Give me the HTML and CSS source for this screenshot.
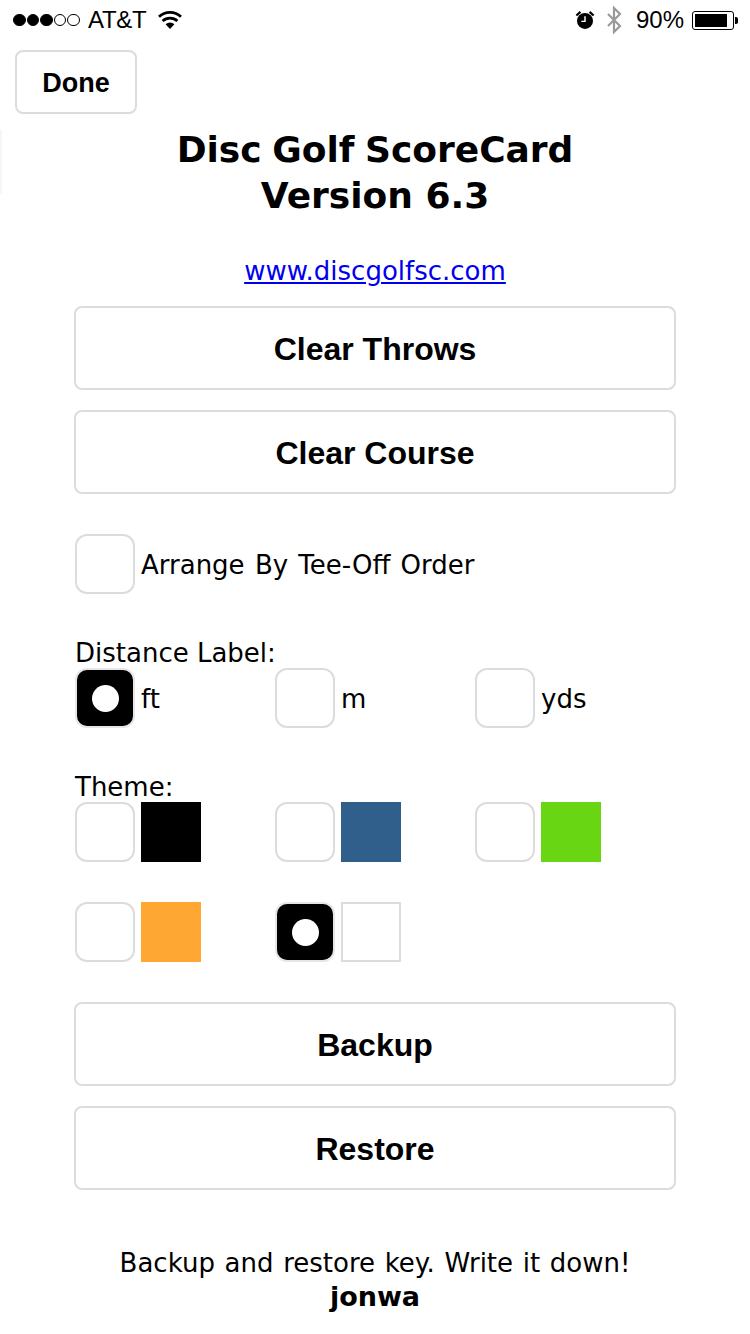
FILE: index.html
```html
<!DOCTYPE html>
<html lang="en">
<head>
<meta charset="utf-8">
<title>Disc Golf ScoreCard</title>
<link rel="stylesheet" href="styles.css">
</head>
<body>
<div class="edge"></div>
<div class="status">
  <div class="status-left">
    <span class="signal"><i class="on"></i><i class="on"></i><i class="on"></i><i></i><i></i></span>
    <span class="carrier">AT&amp;T</span>
    <svg class="wifi" width="26" height="20" viewBox="0 0 26 20"><path d="M13 19 L8.6 14.2 A6.5 6.5 0 0 1 17.4 14.2 Z" fill="#000"/><path d="M5.6 11 A10.8 10.8 0 0 1 20.4 11" fill="none" stroke="#000" stroke-width="2.8"/><path d="M2 6.8 A16 16 0 0 1 24 6.8" fill="none" stroke="#000" stroke-width="2.8"/></svg>
  </div>
  <div class="status-right">
    <svg class="alarm" width="20" height="20" viewBox="0 0 22 22"><circle cx="11" cy="12" r="8.8" fill="#000"/><path d="M11 7v5.5H7" fill="none" stroke="#fff" stroke-width="1.6"/><path d="M1.5 6 L6 2 M20.5 6 L16 2" stroke="#000" stroke-width="2.4"/></svg>
    <svg class="bt" width="16" height="28" viewBox="0 0 16 28"><path d="M2 8 L14 20 L8 26 V2 L14 8 L2 20" fill="none" stroke="#9a9a9a" stroke-width="2.2"/></svg>
    <span class="percent">90%</span>
    <span class="battery"><span class="level"></span></span><span class="nub"></span>
  </div>
</div>

<div class="top"><button class="btn done">Done</button></div>

<h1 class="title">Disc Golf ScoreCard<br>Version 6.3</h1>
<p class="site"><a href="#">www.discgolfsc.com</a></p>

<main class="content">
  <button class="btn wide">Clear Throws</button>
  <button class="btn wide">Clear Course</button>

  <div class="check-row">
    <span class="box"></span><span class="text">Arrange By Tee-Off Order</span>
  </div>

  <div class="label distance-label">Distance Label:</div>
  <div class="options">
    <div class="opt"><span class="box sel"></span><span class="text">ft</span></div>
    <div class="opt"><span class="box"></span><span class="text">m</span></div>
    <div class="opt"><span class="box"></span><span class="text">yds</span></div>
  </div>

  <div class="label theme-label">Theme:</div>
  <div class="options themes">
    <div class="opt"><span class="box"></span><span class="swatch black"></span></div>
    <div class="opt"><span class="box"></span><span class="swatch blue"></span></div>
    <div class="opt"><span class="box"></span><span class="swatch green"></span></div>
    <div class="opt"><span class="box"></span><span class="swatch orange"></span></div>
    <div class="opt"><span class="box sel"></span><span class="swatch white"></span></div>
  </div>

  <button class="btn wide">Backup</button>
  <button class="btn wide">Restore</button>
</main>

<footer class="foot">
  <div class="key-note">Backup and restore key. Write it down!</div>
  <div class="key">jonwa</div>
</footer>
</body>
</html>
```

FILE: styles.css
```css
* { box-sizing: border-box; }
html, body { margin: 0; padding: 0; background: #fff; color: #000; }
body { width: 750px; height: 1334px; overflow: hidden; font-family: "DejaVu Sans", sans-serif; position: relative; }

.edge { position: absolute; left: 0; top: 130px; width: 2px; height: 64px; background: #f6f6f6; }

.status { height: 40px; display: flex; justify-content: space-between; align-items: center; font-family: "Liberation Sans", Arial, sans-serif; font-size: 24px; padding: 0 12px 0 13px; }
.status-left, .status-right { display: flex; align-items: center; }
.signal { display: flex; gap: 1px; margin-right: 8px; }
.signal i { width: 12.6px; height: 12.6px; border-radius: 50%; border: 1px solid #000; }
.signal i.on { background: #000; }
.carrier { width: 58px; white-space: nowrap; letter-spacing: -0.3px; }
.wifi { margin-left: 11px; }
.alarm { margin-right: 11px; }
.bt { margin-right: 14px; }
.percent { margin-right: 8px; }
.battery { width: 42px; height: 19px; border: 1.5px solid #000; border-radius: 3px; padding: 2px; display: flex; }
.level { flex: 0 0 90%; background: #000; }
.nub { width: 3px; height: 7px; background: #000; margin-left: 1px; border-radius: 0 2px 2px 0; }

.btn { display: block; background: #fff; border: 2px solid #dcdcdc; border-radius: 8px; font-family: "Liberation Sans", Arial, sans-serif; font-weight: 700; color: #000; padding: 2px 0 0; }
.top { padding: 10px 0 0 15px; }
.done { width: 122px; height: 64px; font-size: 27px; }

.title { margin: 13px 0 0; text-align: center; font-size: 36px; line-height: 46px; font-weight: 700; }
.title::first-line { word-spacing: -2px; }
.site { margin: 36px 0 0; text-align: center; font-size: 26px; line-height: 32px; }
.site a { color: #0000ee; }

.content { margin: 19px 0 0 74px; width: 602px; }
.wide { width: 602px; height: 84px; font-size: 32px; margin-bottom: 20px; }

.box { flex: none; display: flex; align-items: center; justify-content: center; width: 60px; height: 60px; border: 2px solid #dcdcdc; border-radius: 12px; background: #fff; }
.box.sel { background: #000; border-color: #e6e6e6; }
.box.sel::after { content: ""; width: 27px; height: 27px; border-radius: 50%; background: #fff; }
.text { font-size: 26px; margin-left: 6px; padding-top: 2px; }

.check-row { display: flex; align-items: center; margin: 40px 0 0 1px; word-spacing: 2px; }
.label { font-size: 26px; line-height: 30px; margin-left: 1px; }
.distance-label { margin-top: 44px; }
.theme-label { margin-top: 44px; }

.options { display: grid; grid-template-columns: repeat(3, 200px); margin-left: 1px; }
.opt { display: flex; align-items: center; }
.themes { row-gap: 40px; margin-bottom: 40px; }
.swatch { flex: none; width: 60px; height: 60px; margin-left: 6px; }
.black { background: #000; }
.blue { background: #2f5f8a; }
.green { background: #69d614; }
.orange { background: #ffa733; }
.white { background: #fff; border: 2px solid #dcdcdc; }

.foot { margin-top: 56px; text-align: center; font-size: 26px; line-height: 34px; }
.key-note { word-spacing: 1.4px; }
.key { font-weight: 700; font-size: 27px; }
```
